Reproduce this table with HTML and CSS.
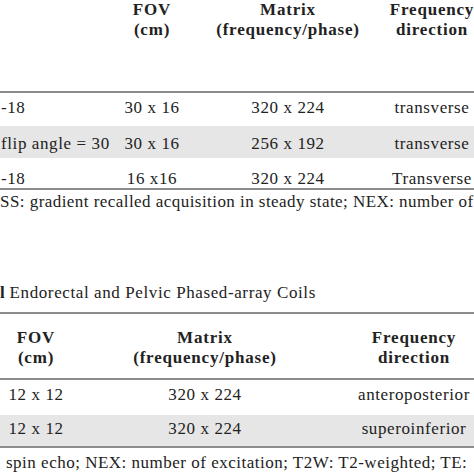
FILE: index.html
```html
<!DOCTYPE html>
<html lang="en">
<head>
<meta charset="utf-8">
<title>MR protocol tables</title>
<link rel="stylesheet" href="styles.css">
</head>
<body>
<div class="page">
  <div class="t1">
    <div class="row head">
      <div class="cell"></div>
      <div class="cell"><span class="l1">FOV</span><span class="l2">(cm)</span></div>
      <div class="cell"><span class="l1">Matrix</span><span class="l2">(frequency/phase)</span></div>
      <div class="cell"><span class="l1">Frequency</span><span class="l2">direction</span></div>
    </div>
    <div class="row r1">
      <div class="cell lead">-18</div>
      <div class="cell">30 x 16</div>
      <div class="cell">320 x 224</div>
      <div class="cell">transverse</div>
    </div>
    <div class="row r2 shade">
      <div class="cell lead">flip angle = 30</div>
      <div class="cell">30 x 16</div>
      <div class="cell">256 x 192</div>
      <div class="cell">transverse</div>
    </div>
    <div class="row r3 last">
      <div class="cell lead">-18</div>
      <div class="cell">16 x16</div>
      <div class="cell">320 x 224</div>
      <div class="cell">Transverse</div>
    </div>
  </div>
  <p class="note note1">SS: gradient recalled acquisition in steady state; NEX: number of</p>

  <p class="caption"><b class="cut">l</b> Endorectal and Pelvic Phased-array Coils</p>
  <div class="t2">
    <div class="row head">
      <div class="cell">FOV<br>(cm)</div>
      <div class="cell">Matrix<br>(frequency/phase)</div>
      <div class="cell">Frequency<br>direction</div>
    </div>
    <div class="row r1">
      <div class="cell">12 x 12</div>
      <div class="cell">320 x 224</div>
      <div class="cell">anteroposterior</div>
    </div>
    <div class="row r2 shade last">
      <div class="cell">12 x 12</div>
      <div class="cell">320 x 224</div>
      <div class="cell">superoinferior</div>
    </div>
  </div>
  <p class="note note2">spin echo; NEX: number of excitation; T2W: T2-weighted; TE:</p>
</div>
</body>
</html>
```

FILE: styles.css
```css
html, body {
  margin: 0;
  padding: 0;
  background: #ffffff;
}

body {
  width: 474px;
  height: 474px;
  overflow: hidden;
  font-family: "Liberation Serif", "Times New Roman", serif;
  font-size: 17px;
  letter-spacing: 0.6px;
  color: #222222;
}

.page {
  width: 474px;
}

.row {
  display: grid;
  line-height: 18px;
  text-align: center;
  white-space: nowrap;
}

.cell {
  min-width: 0;
}

.shade {
  background: #e6e6e6;
}

.head {
  font-weight: bold;
  letter-spacing: 0.8px;
}

/* ---------- table 1 ---------- */
.t1 {
  width: 482px;
}

.t1 .row {
  grid-template-columns: 110px 84px 188px 100px;
}

.t1 .head {
  height: 91px;
  border-bottom: 2px solid #8c8c8c;
}

.l1 {
  display: block;
  line-height: 19px;
}

.l2 {
  display: block;
  line-height: 22px;
}

.t1 .r1 { padding: 6px 0 9px; }
.t1 .r2 { padding: 9px 0 5px; }
.t1 .r3 { padding: 12px 0 0; }

.t1 .last {
  border-bottom: 2px solid #8c8c8c;
}

.lead {
  text-align: left;
  padding-left: 1px;
}

/* ---------- notes ---------- */
.note {
  margin: 0;
  line-height: 18px;
  white-space: nowrap;
}

.note1 {
  margin-top: 3px;
  letter-spacing: 0.45px;
}

.note2 {
  margin-top: 6px;
  margin-left: 6px;
  letter-spacing: 0.5px;
}

/* ---------- caption ---------- */
.caption {
  margin: 73px 0 0;
  line-height: 18px;
  white-space: nowrap;
  letter-spacing: 0.6px;
}

.cut {
  letter-spacing: 0;
}

/* ---------- table 2 ---------- */
.t2 {
  width: 490px;
  margin-top: 10px;
  border-top: 2px solid #8c8c8c;
}

.t2 .row {
  grid-template-columns: 72px 266px 152px;
}

.t2 .head {
  padding: 14px 0 10px;
  line-height: 20px;
  border-bottom: 2px solid #8c8c8c;
}

.t2 .r1 { padding: 6px 0 11px; }
.t2 .r2 { padding: 5px 0 8px; }

.t2 .last {
  border-bottom: 2px solid #8c8c8c;
}
```
